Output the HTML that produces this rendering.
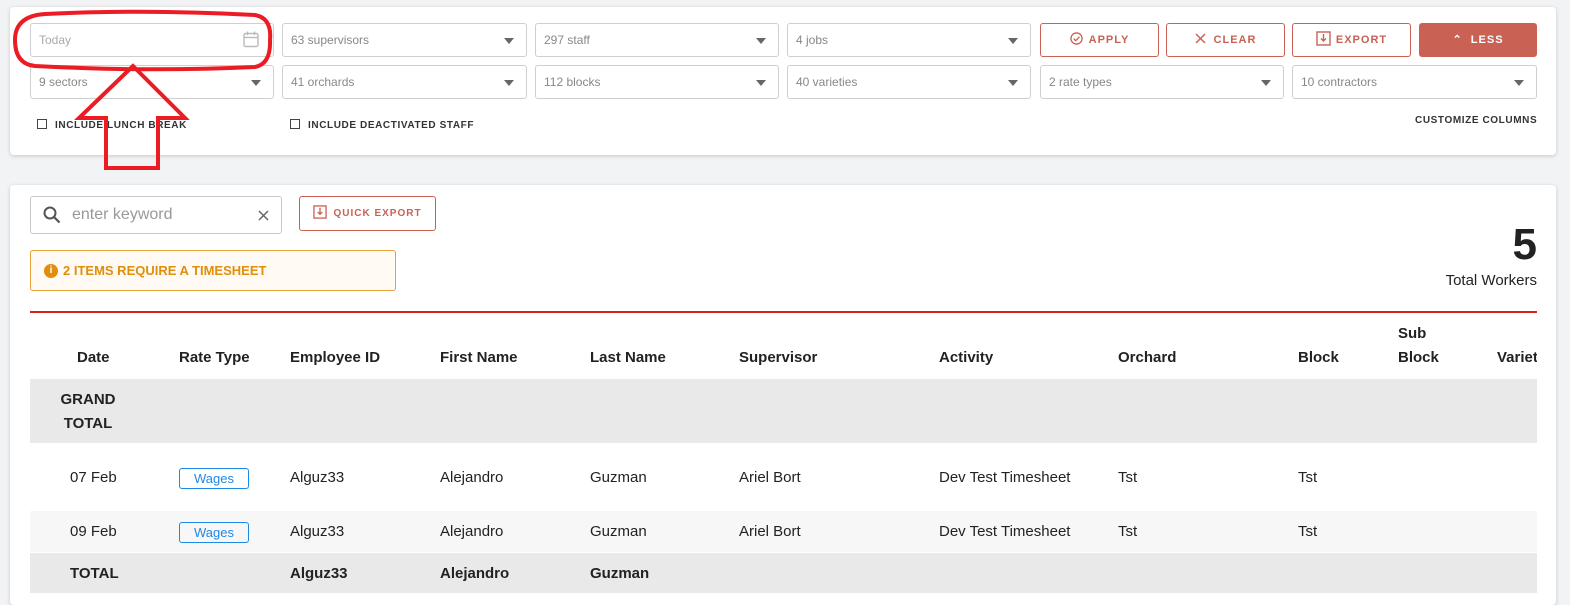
<!DOCTYPE html>
<html><head><meta charset="utf-8"><style>
*{box-sizing:border-box;margin:0;padding:0}
body{width:1570px;height:598px;overflow:hidden;background:#f2f3f5;font-family:"Liberation Sans",sans-serif;position:relative}
.card{position:absolute;left:10px;width:1546px;background:#fff;border-radius:4px;box-shadow:0 1px 4px rgba(0,0,0,.18)}
.f{position:absolute;height:34px;border:1px solid #cfcfcf;border-radius:3px;font-size:12px;color:#888;padding:0 8px;line-height:32px}
.f .car{position:absolute;right:12px;top:14px;border-left:5px solid transparent;border-right:5px solid transparent;border-top:6px solid #666}
.b{position:absolute;top:23px;height:34px;width:119px;border:1px solid #c96155;border-radius:3px;color:#c96155;font-size:11px;font-weight:bold;letter-spacing:1px;text-align:center;line-height:32px}
.cb{position:absolute;top:119px;font-size:10px;font-weight:bold;letter-spacing:.6px;color:#333}
.cb i{display:inline-block;width:10px;height:10px;border:1.5px solid #444;vertical-align:-1px;margin-right:8px}
.t{position:absolute;font-size:15px;color:#222}
.h{font-weight:bold;color:#222}
.row{position:absolute;left:30px;width:1507px}
.tag{position:absolute;width:70px;height:21px;border:1px solid #1e88e5;border-radius:3px;color:#1e88e5;font-size:13px;text-align:center;line-height:19px}
</style></head><body>
<div class="card" style="top:7px;height:148px"></div>
<div class="f" style="left:30px;top:23px;width:244px;color:#aaa">Today
<svg style="position:absolute;right:14px;top:7px" width="16" height="17" viewBox="0 0 16 17"><rect x="1" y="2.5" width="14" height="13" rx="1.5" fill="none" stroke="#bbb" stroke-width="1.4"/><line x1="1" y1="6.5" x2="15" y2="6.5" stroke="#bbb" stroke-width="1.4"/><line x1="4.5" y1="0.5" x2="4.5" y2="4" stroke="#bbb" stroke-width="1.4"/><line x1="11.5" y1="0.5" x2="11.5" y2="4" stroke="#bbb" stroke-width="1.4"/></svg></div>
<div class="f" style="left:282px;top:23px;width:245px">63 supervisors<span class="car"></span></div>
<div class="f" style="left:535px;top:23px;width:244px">297 staff<span class="car"></span></div>
<div class="f" style="left:787px;top:23px;width:244px">4 jobs<span class="car"></span></div>
<div class="b" style="left:1040px"><svg width="13" height="13" viewBox="0 0 14 14" style="vertical-align:-2px;margin-right:6px"><circle cx="7" cy="7" r="6" fill="none" stroke="#c96155" stroke-width="1.4"/><path d="M4 7.2l2.2 2.2L10.2 5" fill="none" stroke="#c96155" stroke-width="1.4"/></svg>APPLY</div>
<div class="b" style="left:1166px"><svg width="11" height="11" viewBox="0 0 11 11" style="vertical-align:-1px;margin-right:8px"><path d="M1 1l9 9M10 1l-9 9" stroke="#c96155" stroke-width="1.5"/></svg>CLEAR</div>
<div class="b" style="left:1292px"><svg width="15" height="15" viewBox="0 0 15 15" style="vertical-align:-3px;margin-right:5px"><rect x="1" y="1" width="13" height="13" fill="none" stroke="#c96155" stroke-width="1.4"/><path d="M7.5 3v7M5 7.5l2.5 2.5L10 7.5" fill="none" stroke="#c96155" stroke-width="1.4"/></svg>EXPORT</div>
<div class="b" style="left:1419px;width:118px;background:#c96155;color:#fff">&#8963;&nbsp; LESS</div>
<div class="f" style="left:30px;top:65px;width:244px">9 sectors<span class="car"></span></div>
<div class="f" style="left:282px;top:65px;width:245px">41 orchards<span class="car"></span></div>
<div class="f" style="left:535px;top:65px;width:244px">112 blocks<span class="car"></span></div>
<div class="f" style="left:787px;top:65px;width:244px">40 varieties<span class="car"></span></div>
<div class="f" style="left:1040px;top:65px;width:244px">2 rate types<span class="car"></span></div>
<div class="f" style="left:1292px;top:65px;width:245px">10 contractors<span class="car"></span></div>
<div class="cb" style="left:37px"><i></i>INCLUDE LUNCH BREAK</div>
<div class="cb" style="left:290px"><i></i>INCLUDE DEACTIVATED STAFF</div>
<div class="cb" style="left:1415px;top:115px">CUSTOMIZE COLUMNS</div>

<div class="card" style="top:185px;height:420px"></div>
<div style="position:absolute;left:30px;top:196px;width:252px;height:38px;border:1px solid #c8c8c8;border-radius:3px">
<svg style="position:absolute;left:12px;top:9px" width="18" height="18" viewBox="0 0 18 18"><circle cx="7" cy="7" r="5.5" fill="none" stroke="#555" stroke-width="2"/><path d="M11 11l5.5 5.5" stroke="#555" stroke-width="2.2"/></svg>
<span style="position:absolute;left:41px;top:9px;font-size:16px;color:#999">enter keyword</span>
<svg style="position:absolute;right:12px;top:13px" width="11" height="11"><path d="M1 1l9 9M10 1l-9 9" stroke="#666" stroke-width="1.5"/></svg></div>
<div style="position:absolute;left:299px;top:196px;width:137px;height:35px;border:1px solid #c96155;border-radius:3px;color:#c96155;font-size:10px;font-weight:bold;letter-spacing:1px;line-height:33px;text-align:center"><svg width="14" height="14" viewBox="0 0 15 15" style="vertical-align:-3px;margin-right:6px"><rect x="1" y="1" width="13" height="13" fill="none" stroke="#c96155" stroke-width="1.4"/><path d="M7.5 3v7M5 7.5l2.5 2.5L10 7.5" fill="none" stroke="#c96155" stroke-width="1.4"/></svg>QUICK EXPORT</div>
<div style="position:absolute;left:30px;top:250px;width:366px;height:41px;border:1px solid #e8a33a;border-radius:3px;background:#fffaf3;color:#e08e0b;font-size:13px;font-weight:bold;display:flex;align-items:center;padding-left:13px"><span style="display:inline-block;width:14px;height:14px;border-radius:50%;background:#e08e0b;color:#fff;font-size:10px;line-height:14px;text-align:center;margin-right:5px">i</span>2 ITEMS REQUIRE A TIMESHEET</div>
<div style="position:absolute;right:33px;top:220px;font-size:44px;font-weight:bold;color:#222">5</div>
<div style="position:absolute;right:33px;top:272px;font-size:15px;color:#222">Total Workers</div>
<div style="position:absolute;left:30px;top:311px;width:1507px;height:2px;background:#d9201c"></div>

<div class="row" style="top:379px;height:64px;background:#e9e9e9"></div>
<div class="row" style="top:511px;height:41px;background:#f7f7f7"></div>
<div class="row" style="top:553px;height:40px;background:#e9e9e9"></div>

<div class="t h" style="left:77px;top:349px">Date</div>
<div class="t h" style="left:179px;top:349px">Rate Type</div>
<div class="t h" style="left:290px;top:349px">Employee ID</div>
<div class="t h" style="left:440px;top:349px">First Name</div>
<div class="t h" style="left:590px;top:349px">Last Name</div>
<div class="t h" style="left:739px;top:349px">Supervisor</div>
<div class="t h" style="left:939px;top:349px">Activity</div>
<div class="t h" style="left:1118px;top:349px">Orchard</div>
<div class="t h" style="left:1298px;top:349px">Block</div>
<div class="t h" style="left:1398px;top:322px;line-height:24px">Sub<br>Block</div>
<div class="t h" style="left:1497px;top:349px;width:40px;overflow:hidden;white-space:nowrap">Variety</div>

<div class="t h" style="left:60px;top:388px;line-height:24px;text-align:center;width:56px">GRAND TOTAL</div>

<div class="t" style="left:70px;top:469px">07 Feb</div>
<div class="tag" style="left:179px;top:468px">Wages</div>
<div class="t" style="left:290px;top:469px">Alguz33</div>
<div class="t" style="left:440px;top:469px">Alejandro</div>
<div class="t" style="left:590px;top:469px">Guzman</div>
<div class="t" style="left:739px;top:469px">Ariel Bort</div>
<div class="t" style="left:939px;top:469px">Dev Test Timesheet</div>
<div class="t" style="left:1118px;top:469px">Tst</div>
<div class="t" style="left:1298px;top:469px">Tst</div>

<div class="t" style="left:70px;top:523px">09 Feb</div>
<div class="tag" style="left:179px;top:522px">Wages</div>
<div class="t" style="left:290px;top:523px">Alguz33</div>
<div class="t" style="left:440px;top:523px">Alejandro</div>
<div class="t" style="left:590px;top:523px">Guzman</div>
<div class="t" style="left:739px;top:523px">Ariel Bort</div>
<div class="t" style="left:939px;top:523px">Dev Test Timesheet</div>
<div class="t" style="left:1118px;top:523px">Tst</div>
<div class="t" style="left:1298px;top:523px">Tst</div>

<div class="t h" style="left:70px;top:565px">TOTAL</div>
<div class="t h" style="left:290px;top:565px">Alguz33</div>
<div class="t h" style="left:440px;top:565px">Alejandro</div>
<div class="t h" style="left:590px;top:565px">Guzman</div>

<svg style="position:absolute;left:0;top:0" width="1570" height="598">
<path d="M45 14 Q145 9 255 15 Q272 18 270 40 Q271 64 255 67 Q145 72 35 66 Q15 64 15 40 Q15 16 45 14Z" fill="none" stroke="#ec1c24" stroke-width="4"/>
<path d="M133 66L79 118H106V168H158V118H185Z" fill="none" stroke="#ec1c24" stroke-width="4"/>
</svg>
</body></html>
